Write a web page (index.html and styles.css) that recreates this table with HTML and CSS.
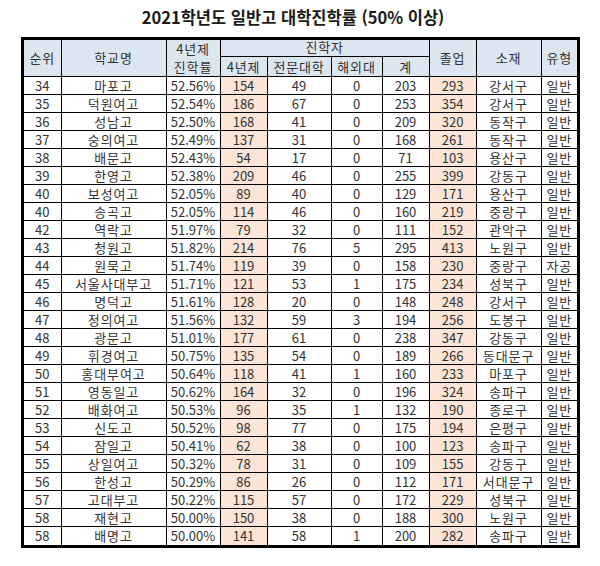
FILE: index.html
```html
<!DOCTYPE html>
<html lang="ko">
<head>
<meta charset="utf-8">
<title>2021학년도 일반고 대학진학률</title>
<link rel="stylesheet" href="styles.css">
</head>
<body>
<div class="page">
  <h1 class="title">2021학년도 일반고 대학진학률 (50% 이상)</h1>
  <div class="frame">
    <table class="grid">
      <colgroup>
        <col class="c-rank"><col class="c-name"><col class="c-rate"><col class="c-four"><col class="c-college"><col class="c-abroad"><col class="c-sum"><col class="c-grad"><col class="c-loc"><col class="c-type">
      </colgroup>
      <thead>
        <tr class="h1">
          <th rowspan="2">순위</th>
          <th rowspan="2">학교명</th>
          <th rowspan="2" class="two">4년제<br>진학률</th>
          <th colspan="4" class="group">진학자</th>
          <th rowspan="2">졸업</th>
          <th rowspan="2">소재</th>
          <th rowspan="2">유형</th>
        </tr>
        <tr class="h2">
          <th>4년제</th>
          <th>전문대학</th>
          <th>해외대</th>
          <th>계</th>
        </tr>
      </thead>
      <tbody>
        <tr><td>34</td><td class="ko">마포고</td><td>52.56%</td><td class="pk">154</td><td>49</td><td>0</td><td>203</td><td class="pk">293</td><td class="ko">강서구</td><td class="ko">일반</td></tr>
        <tr><td>35</td><td class="ko">덕원여고</td><td>52.54%</td><td class="pk">186</td><td>67</td><td>0</td><td>253</td><td class="pk">354</td><td class="ko">강서구</td><td class="ko">일반</td></tr>
        <tr><td>36</td><td class="ko">성남고</td><td>52.50%</td><td class="pk">168</td><td>41</td><td>0</td><td>209</td><td class="pk">320</td><td class="ko">동작구</td><td class="ko">일반</td></tr>
        <tr><td>37</td><td class="ko">숭의여고</td><td>52.49%</td><td class="pk">137</td><td>31</td><td>0</td><td>168</td><td class="pk">261</td><td class="ko">동작구</td><td class="ko">일반</td></tr>
        <tr><td>38</td><td class="ko">배문고</td><td>52.43%</td><td class="pk">54</td><td>17</td><td>0</td><td>71</td><td class="pk">103</td><td class="ko">용산구</td><td class="ko">일반</td></tr>
        <tr><td>39</td><td class="ko">한영고</td><td>52.38%</td><td class="pk">209</td><td>46</td><td>0</td><td>255</td><td class="pk">399</td><td class="ko">강동구</td><td class="ko">일반</td></tr>
        <tr><td>40</td><td class="ko">보성여고</td><td>52.05%</td><td class="pk">89</td><td>40</td><td>0</td><td>129</td><td class="pk">171</td><td class="ko">용산구</td><td class="ko">일반</td></tr>
        <tr><td>40</td><td class="ko">송곡고</td><td>52.05%</td><td class="pk">114</td><td>46</td><td>0</td><td>160</td><td class="pk">219</td><td class="ko">중랑구</td><td class="ko">일반</td></tr>
        <tr><td>42</td><td class="ko">역락고</td><td>51.97%</td><td class="pk">79</td><td>32</td><td>0</td><td>111</td><td class="pk">152</td><td class="ko">관악구</td><td class="ko">일반</td></tr>
        <tr><td>43</td><td class="ko">청원고</td><td>51.82%</td><td class="pk">214</td><td>76</td><td>5</td><td>295</td><td class="pk">413</td><td class="ko">노원구</td><td class="ko">일반</td></tr>
        <tr><td>44</td><td class="ko">원묵고</td><td>51.74%</td><td class="pk">119</td><td>39</td><td>0</td><td>158</td><td class="pk">230</td><td class="ko">중랑구</td><td class="ko">자공</td></tr>
        <tr><td>45</td><td class="ko">서울사대부고</td><td>51.71%</td><td class="pk">121</td><td>53</td><td>1</td><td>175</td><td class="pk">234</td><td class="ko">성북구</td><td class="ko">일반</td></tr>
        <tr><td>46</td><td class="ko">명덕고</td><td>51.61%</td><td class="pk">128</td><td>20</td><td>0</td><td>148</td><td class="pk">248</td><td class="ko">강서구</td><td class="ko">일반</td></tr>
        <tr><td>47</td><td class="ko">정의여고</td><td>51.56%</td><td class="pk">132</td><td>59</td><td>3</td><td>194</td><td class="pk">256</td><td class="ko">도봉구</td><td class="ko">일반</td></tr>
        <tr><td>48</td><td class="ko">광문고</td><td>51.01%</td><td class="pk">177</td><td>61</td><td>0</td><td>238</td><td class="pk">347</td><td class="ko">강동구</td><td class="ko">일반</td></tr>
        <tr><td>49</td><td class="ko">휘경여고</td><td>50.75%</td><td class="pk">135</td><td>54</td><td>0</td><td>189</td><td class="pk">266</td><td class="ko">동대문구</td><td class="ko">일반</td></tr>
        <tr><td>50</td><td class="ko">홍대부여고</td><td>50.64%</td><td class="pk">118</td><td>41</td><td>1</td><td>160</td><td class="pk">233</td><td class="ko">마포구</td><td class="ko">일반</td></tr>
        <tr><td>51</td><td class="ko">영동일고</td><td>50.62%</td><td class="pk">164</td><td>32</td><td>0</td><td>196</td><td class="pk">324</td><td class="ko">송파구</td><td class="ko">일반</td></tr>
        <tr><td>52</td><td class="ko">배화여고</td><td>50.53%</td><td class="pk">96</td><td>35</td><td>1</td><td>132</td><td class="pk">190</td><td class="ko">종로구</td><td class="ko">일반</td></tr>
        <tr><td>53</td><td class="ko">신도고</td><td>50.52%</td><td class="pk">98</td><td>77</td><td>0</td><td>175</td><td class="pk">194</td><td class="ko">은평구</td><td class="ko">일반</td></tr>
        <tr><td>54</td><td class="ko">잠일고</td><td>50.41%</td><td class="pk">62</td><td>38</td><td>0</td><td>100</td><td class="pk">123</td><td class="ko">송파구</td><td class="ko">일반</td></tr>
        <tr><td>55</td><td class="ko">상일여고</td><td>50.32%</td><td class="pk">78</td><td>31</td><td>0</td><td>109</td><td class="pk">155</td><td class="ko">강동구</td><td class="ko">일반</td></tr>
        <tr><td>56</td><td class="ko">한성고</td><td>50.29%</td><td class="pk">86</td><td>26</td><td>0</td><td>112</td><td class="pk">171</td><td class="ko">서대문구</td><td class="ko">일반</td></tr>
        <tr><td>57</td><td class="ko">고대부고</td><td>50.22%</td><td class="pk">115</td><td>57</td><td>0</td><td>172</td><td class="pk">229</td><td class="ko">성북구</td><td class="ko">일반</td></tr>
        <tr><td>58</td><td class="ko">재현고</td><td>50.00%</td><td class="pk">150</td><td>38</td><td>0</td><td>188</td><td class="pk">300</td><td class="ko">노원구</td><td class="ko">일반</td></tr>
        <tr><td>58</td><td class="ko">배명고</td><td>50.00%</td><td class="pk">141</td><td>58</td><td>1</td><td>200</td><td class="pk">282</td><td class="ko">송파구</td><td class="ko">일반</td></tr>
      </tbody>
    </table>
  </div>
</div>
</body>
</html>
```

FILE: styles.css
```css
html, body {
  margin: 0;
  padding: 0;
  background: #ffffff;
}

.page {
  width: 600px;
  height: 566px;
  padding: 0 0 0 21px;
  box-sizing: border-box;
  font-family: "Noto Sans CJK KR", "Noto Sans", sans-serif;
  color: #333333;
}

.title {
  margin: 0;
  padding: 7px 35px 0 0;
  height: 30px;
  box-sizing: border-box;
  font-size: 16.5px;
  line-height: 20px;
  font-weight: bold;
  color: #1a1a1a;
  text-align: center;
}

.frame {
  width: 559px;
  box-sizing: border-box;
  margin-top: 7px;
  border: 3px solid #000000;
}

.grid {
  width: 553px;
  table-layout: fixed;
  border-collapse: collapse;
  border-style: hidden;
  font-size: 13px;
}

.c-rank { width: 37px; }
.c-name { width: 105px; }
.c-rate { width: 54px; }
.c-four { width: 47px; }
.c-college { width: 64px; }
.c-abroad { width: 51px; }
.c-sum { width: 47px; }
.c-grad { width: 47px; }
.c-loc { width: 65px; }
.c-type { width: 36px; }

.grid th,
.grid td {
  border: 1px solid #000000;
  padding: 0;
  text-align: center;
  vertical-align: middle;
  white-space: nowrap;
  font-weight: normal;
}

.grid th {
  background: #dce6f1;
  line-height: 16px;
  letter-spacing: 0.8px;
}

.grid th.two {
  line-height: 18px;
}

.grid .h1 th { height: 16px; }
.grid .h2 th { height: 18px; }

.grid th.group {
  vertical-align: top;
  line-height: 14px;
}

.grid tbody tr { height: 18px; }

.grid td {
  height: 17px;
  line-height: 17px;
  overflow: hidden;
}

.grid td.ko {
  letter-spacing: 0.9px;
}

.grid td.pk {
  background: #fce4d6;
}
```
